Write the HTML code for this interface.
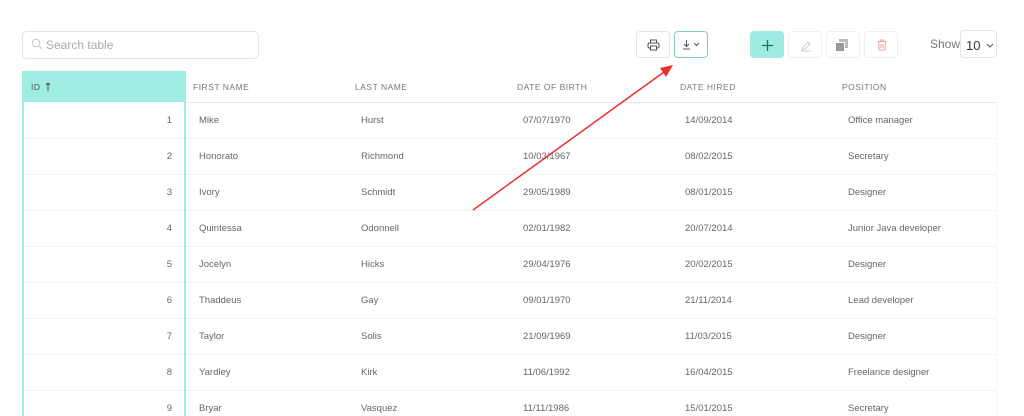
<!DOCTYPE html>
<html><head><style>
*{margin:0;padding:0;box-sizing:border-box}
body{width:1024px;height:416px;background:#fff;font-family:"Liberation Sans",sans-serif;position:relative;overflow:hidden;color:#555}
.a{position:absolute}
.btn{position:absolute;top:31px;width:34px;height:27px;border:1px solid #e4e4e4;border-radius:4px;background:#fff}
.hd{position:absolute;top:82px;font-size:8.5px;letter-spacing:.5px;color:#777}
.c{position:absolute;font-size:9.5px;color:#666}
.rl{position:absolute;left:186px;width:811px;height:1px;background:#f2f2f2}
</style></head><body>
<div class="a" style="left:22px;top:31px;width:237px;height:28px;border:1px solid #e4e4e4;border-radius:5px"></div>
<svg class="a" style="left:31px;top:38px" width="12" height="12" viewBox="0 0 12 12"><circle cx="5" cy="5" r="3.8" fill="none" stroke="#c4c4c4" stroke-width="1"/><line x1="7.8" y1="7.8" x2="11" y2="11" stroke="#c4c4c4"/></svg>
<div class="a" style="left:46px;top:38px;font-size:12px;color:#aaa">Search table</div>

<div class="btn" style="left:636px"><svg class="a" style="left:10px;top:7px" width="13" height="12" viewBox="0 0 13 12"><rect x="3.5" y="1" width="6" height="3" fill="none" stroke="#555"/><rect x="1" y="4" width="11" height="5" rx="1.5" fill="none" stroke="#555"/><rect x="3.5" y="7" width="6" height="4" fill="#fff" stroke="#555"/></svg></div>
<div class="btn" style="left:674px;border-color:#7fcfc2"><svg class="a" style="left:7px;top:8px" width="20" height="10" viewBox="0 0 20 10"><path d="M4.5 0v6M2 4l2.5 2.5L7 4M1 9h7" fill="none" stroke="#555"/><path d="M12 3l2.5 2.5L17 3" fill="none" stroke="#555"/></svg></div>
<div class="btn" style="left:750px;background:#9cece1;border-color:#9cece1"><svg class="a" style="left:10px;top:7px" width="13" height="13"><path d="M6.5 1v11M1 6.5h11" stroke="#2d6b62" stroke-width="1.3"/></svg></div>
<div class="btn" style="left:788px;border-color:#eee"><svg class="a" style="left:11px;top:8px" width="12" height="12"><path d="M2 10l1-3 5-5 2 2-5 5zM1 11h10" fill="none" stroke="#ccc"/></svg></div>
<div class="btn" style="left:826px;border-color:#eee"><div class="a" style="left:12px;top:7px;width:9px;height:9px;background:#bbb"></div><div class="a" style="left:9px;top:10px;width:9px;height:9px;background:#999;border-right:1px solid #fff;border-top:1px solid #fff"></div></div>
<div class="btn" style="left:864px;border-color:#eee"><svg class="a" style="left:11px;top:7px" width="12" height="12"><path d="M1.5 2.5h9M4.5 2.5V1h3v1.5M2.5 2.5l.7 8.5h5.6l.7-8.5M5 5v4M7 5v4" fill="none" stroke="#f0a0a0"/></svg></div>
<div class="a" style="left:930px;top:37px;font-size:12px;color:#777">Show</div>
<div class="a" style="left:960px;top:30px;width:37px;height:28px;border:1px solid #e4e4e4;border-radius:4px"><span class="a" style="left:5px;top:7px;font-size:13px;color:#333">10</span><svg class="a" style="left:25px;top:12px" width="8" height="5"><path d="M1 1l3 3 3-3" fill="none" stroke="#555"/></svg></div>

<div class="a" style="left:22px;top:71px;width:164px;height:31px;background:#9eece2"></div>
<div class="a" style="left:22px;top:71px;width:2px;height:345px;background:#9eece2"></div>
<div class="a" style="left:184px;top:71px;width:2px;height:345px;background:#9eece2"></div>
<div class="hd" style="left:31px;color:#555">ID</div>
<svg class="a" style="left:45px;top:82px" width="6" height="9"><path d="M3 9V1M1 3l2-2 2 2" fill="none" stroke="#555"/></svg>
<div class="hd" style="left:193px">FIRST NAME</div>
<div class="hd" style="left:355px">LAST NAME</div>
<div class="hd" style="left:517px">DATE OF BIRTH</div>
<div class="hd" style="left:680px">DATE HIRED</div>
<div class="hd" style="left:842px">POSITION</div>
<div class="rl" style="top:102px;background:#e6e6e6"></div>
<div class="a" style="left:996px;top:102px;width:1px;height:314px;background:#f3f3f3"></div>

<div id="rows"></div>
<script>
var d=[["Mike","Hurst","07/07/1970","14/09/2014","Office manager"],["Honorato","Richmond","10/03/1967","08/02/2015","Secretary"],["Ivory","Schmidt","29/05/1989","08/01/2015","Designer"],["Quintessa","Odonnell","02/01/1982","20/07/2014","Junior Java developer"],["Jocelyn","Hicks","29/04/1976","20/02/2015","Designer"],["Thaddeus","Gay","09/01/1970","21/11/2014","Lead developer"],["Taylor","Solis","21/09/1969","11/03/2015","Designer"],["Yardley","Kirk","11/06/1992","16/04/2015","Freelance designer"],["Bryar","Vasquez","11/11/1986","15/01/2015","Secretary"]];
var h="",xs=[199,361,523,685,848];
d.forEach(function(r,i){var y=102+i*36+13;
h+='<div class="c" style="left:120px;width:52px;text-align:right;top:'+y+'px">'+(i+1)+'</div>';
r.forEach(function(v,j){h+='<div class="c" style="left:'+xs[j]+'px;top:'+y+'px">'+v+'</div>'});
if(i<8){h+='<div class="rl" style="top:'+(138+i*36)+'px"></div><div class="a" style="left:24px;width:160px;height:1px;background:#f5f5f5;top:'+(138+i*36)+'px"></div>';}});
document.getElementById('rows').innerHTML=h;
</script>
<svg class="a" style="left:0;top:0" width="1024" height="416"><line x1="473" y1="210" x2="664" y2="72" stroke="#e8302f" stroke-width="1.5"/><path d="M673 65L660 68L666 77Z" fill="#e8302f"/></svg>
</body></html>
